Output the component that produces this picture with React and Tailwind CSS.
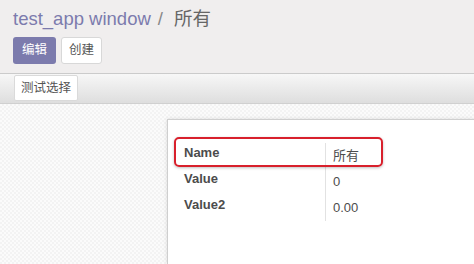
import React from "react";

const fields = [
  { label: "Name", value: "所有" },
  { label: "Value", value: "0" },
  { label: "Value2", value: "0.00" },
];

const font = { fontFamily: '"Liberation Sans", "Noto Sans CJK SC", sans-serif' };

export default function App() {
  return (
    <div style={font} className="w-[474px] h-[264px] overflow-hidden flex flex-col bg-white text-[#4c4c4c]">
      {/* control panel */}
      <div className="h-[74px] shrink-0 bg-[#f0eeee] border-b border-[#cbcbcb] px-[13px] pt-[7px]">
        <div className="flex items-baseline text-[18.5px] leading-[24px]">
          <span className="text-[#7c7bad]">test_app window</span>
          <span className="text-[#888] ml-[7px]">/</span>
          <span className="text-[#666] ml-[11px]">所有</span>
        </div>
        <div className="flex gap-[5px] mt-[6px]">
          <button className="h-[27px] w-[43px] rounded-[3px] bg-[#7c7bad] text-white text-[12.5px]">编辑</button>
          <button className="h-[27px] w-[41px] rounded-[3px] bg-white border border-[#d8d8d8] text-[#555] text-[12.5px]">创建</button>
        </div>
      </div>
      {/* header bar */}
      <div className="h-[30px] shrink-0 bg-gradient-to-b from-[#f7f7f7] to-[#dedede] border-b border-[#d0d0d0] px-[14px] pt-[1px]">
        <button className="h-[26px] w-[64px] bg-white border border-[#dadada] rounded-[2px] text-[#555] text-[12.5px]">测试选择</button>
      </div>
      {/* sheet background */}
      <div className="flex-1 flex pl-[167px] pt-[15px] bg-[repeating-conic-gradient(#f3f3f3_0_25%,#fbfbfb_0_50%)] bg-[length:4px_4px]">
        <div className="relative flex-1 bg-white border-t border-l border-[#cfcfcf] shadow-[0_0_4px_rgba(0,0,0,0.12)] pl-[16px] pt-[23px]">
          <div className="flex text-[13px]">
            <div className="w-[141px] -mt-[3px]">
              {fields.map((f) => (
                <div key={f.label} className="h-[26px] leading-[26px] font-bold">{f.label}</div>
              ))}
            </div>
            <div className="border-l border-[#e2e2e2] pl-[7px]">
              {fields.map((f) => (
                <div key={f.label} className="h-[26px] leading-[26px]">{f.value}</div>
              ))}
            </div>
          </div>
          {/* highlight */}
          <div className="absolute left-[6px] top-[17px] w-[209px] h-[30px] rounded-[5px] border-[2.5px] border-[#d8202c] shadow-[0_1px_3px_rgba(0,0,0,0.25)]" />
        </div>
      </div>
    </div>
  );
}
